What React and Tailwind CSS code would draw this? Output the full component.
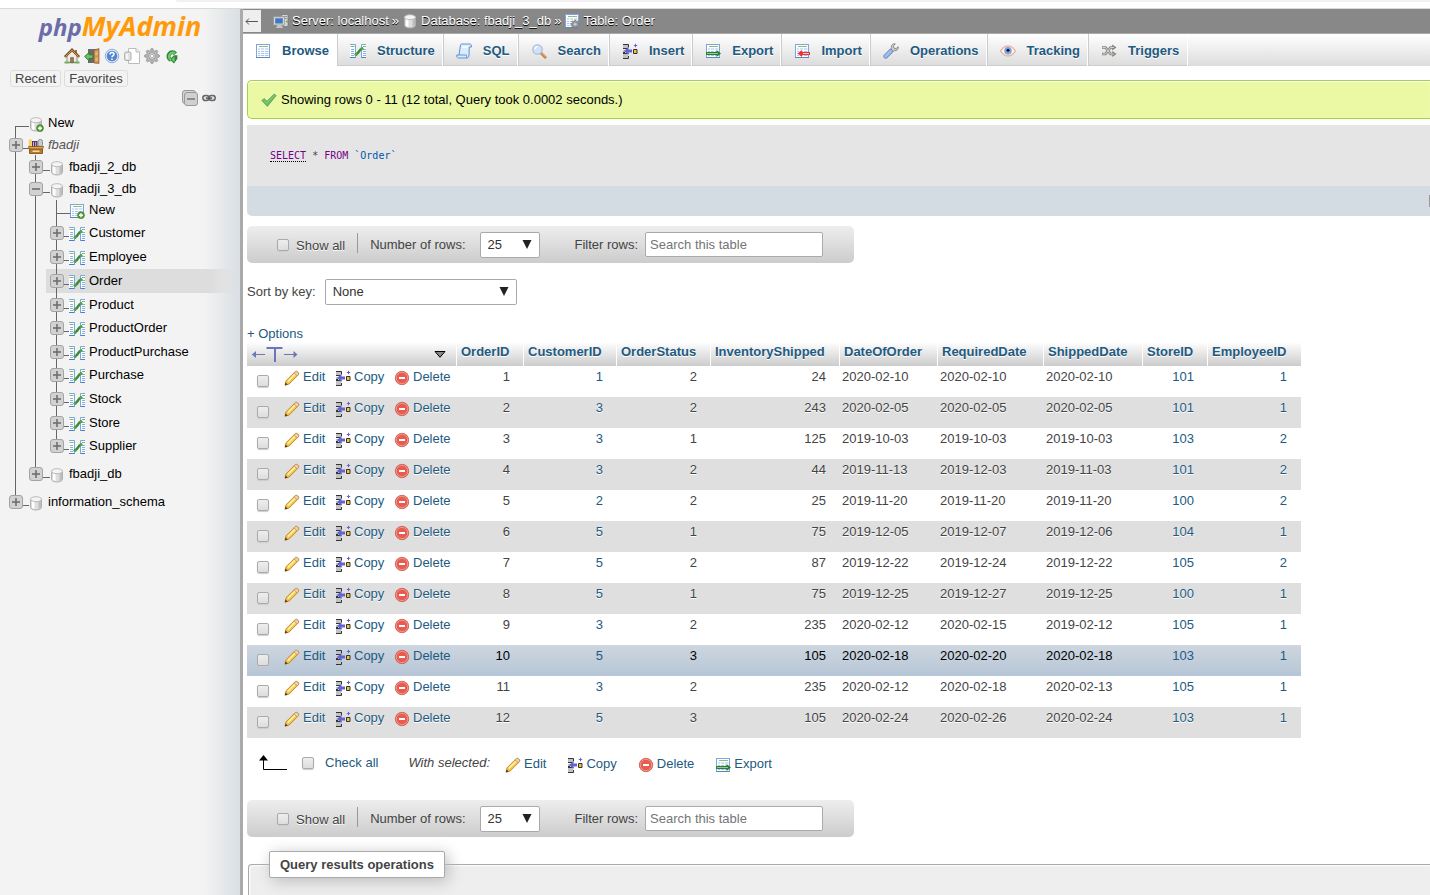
import React from "react";

/* ---------- icons ---------- */

function Icon({ children, className = "" }) {
  return (
    <svg viewBox="0 0 16 16" className={"h-4 w-4 shrink-0 " + className} aria-hidden="true">
      {children}
    </svg>
  );
}

const HomeIcon = () => (
  <Icon>
    <path d="M3 8v6.500h10V8L8 3z" fill="#f3eddf" stroke="#8c8c84" />
    <path d="M11 2h2v3h-2z" fill="#b5763a" />
    <path d="M.8 9 8 1.800 15.200 9" fill="none" stroke="#7b5226" strokeWidth="2.400" />
    <path d="M1.400 8.700 8 2.100l6.600 6.600" fill="none" stroke="#d3a066" strokeWidth="1" />
    <path d="M6.500 9.500h3V15h-3z" fill="#8d7a66" stroke="#6b4a22" strokeWidth=".5" />
    <path d="M.5 13.500h5v2h-5zM10.500 13.500h5v2h-5z" fill="#6fae5c" />
  </Icon>
);
const ExitIcon = () => (
  <Icon>
    <path d="M4 1h11v14H4z" fill="#6b6b6b" />
    <path d="M10 2 15 .6v14.800L10 15z" fill="#cf9455" stroke="#8a5a26" strokeWidth=".7" />
    <path d="M11.300 4 13.800 3.500v3.800l-2.500.3zM11.300 9.500l2.500-.2v3.700l-2.500.3z" fill="#e6b47c" />
    <path d="M.6 8.500 5 4.500v2.300h4v3.600H5v2.400z" fill="#6cc067" stroke="#2a7a2e" strokeWidth=".9" />
  </Icon>
);
const HelpIcon = () => (
  <Icon>
    <circle cx="8" cy="8" r="6.800" fill="#dbe7f6" stroke="#7ba3d6" strokeWidth=".8" />
    <circle cx="8" cy="8" r="5.300" fill="#5586cd" />
    <path d="M6 6.400c0-2.700 4-2.500 4-.2C10 7.700 8 7.700 8 9.200M8 10.400V12" fill="none" stroke="#fff" strokeWidth="1.500" />
  </Icon>
);
const DocIcon = () => (
  <Icon>
    <path d="M4.500 .5h7.500l3.500 3.500v11.500h-11z" fill="#fff" stroke="#bcbcbc" />
    <path d="M12 .5V4h3.500" fill="#eee" stroke="#bcbcbc" />
    <rect x=".6" y="4" width="6.400" height="8.500" rx="1.500" fill="#e2e2e2" stroke="#a5a5a5" strokeWidth=".9" />
    <path d="M3 6v5" stroke="#fff" strokeWidth="1.300" />
  </Icon>
);
const Gear = ({ fill = "#b5b5b5", stroke = "#8a8a8a" }) => (
  <>
    <path
      d="M7 .7h2l.4 1.900 1.500.6 1.600-1.100 1.400 1.400-1.100 1.600.6 1.500 1.900.4v2l-1.900.4-.6 1.500 1.100 1.600-1.400 1.400-1.600-1.100-1.500.6-.4 1.900H7l-.4-1.900-1.500-.6-1.600 1.100-1.400-1.400 1.100-1.600L2.600 9.400.7 9V7l1.900-.4.6-1.500-1.100-1.600 1.400-1.400 1.600 1.100 1.500-.6z"
      fill={fill}
      stroke={stroke}
      strokeWidth=".7"
    />
    <circle cx="8" cy="8" r="3.400" fill="#dcdcdc" stroke={stroke} strokeWidth=".7" />
    <circle cx="8" cy="8" r="1.600" fill="#fff" stroke={stroke} strokeWidth=".6" />
  </>
);
const GearIcon = () => (
  <Icon>
    <Gear />
  </Icon>
);
const ReloadIcon = () => (
  <Icon>
    <path d="M11.500 5.800A4 4 0 1 0 6.800 12" fill="none" stroke="#2f8a38" strokeWidth="4" />
    <path d="M13.400 7.200v3.600L10 15.500 5.800 11.600 10 7.200z" fill="#2f8a38" />
    <path d="M11 5.200A3.900 3.900 0 1 0 6.900 12" fill="none" stroke="#79c47a" strokeWidth="2" />
    <path d="m7.500 11.600 3-3v5.600z" fill="#79c47a" />
  </Icon>
);
const CollapseIcon = () => (
  <Icon>
    <rect x=".5" y=".5" width="13" height="13" rx="2.500" fill="#d4d4d4" stroke="#999" />
    <rect x="2.500" y="2.500" width="13" height="13" rx="2.500" fill="#d0d0d0" stroke="#999" />
    <path d="M5 9h8" stroke="#777" strokeWidth="1.500" />
  </Icon>
);
const LinkIcon = () => (
  <Icon>
    <rect x="1.800" y="5.600" width="6.200" height="5" rx="2.500" fill="#ddd" stroke="#666" strokeWidth="1.500" />
    <rect x="8" y="5.600" width="6.200" height="5" rx="2.500" fill="#ddd" stroke="#666" strokeWidth="1.500" />
    <path d="M5 8.100h6" stroke="#555" strokeWidth="1.500" />
  </Icon>
);
const Cylinder = () => (
  <>
    <path d="M2.500 4.200v8.100c0 1.500 2.500 2.700 5.500 2.700s5.500-1.200 5.500-2.700V4.200z" fill="#dedede" stroke="#aaa" strokeWidth=".9" />
    <path d="M4 5.500v7.600c.8.500 1.500.7 2.500.9V6z" fill="#fff" />
    <path d="M10.500 6v8c1-.2 1.900-.6 2.500-1.200V5z" fill="#bdbdbd" />
    <ellipse cx="8" cy="4.200" rx="5.500" ry="2.500" fill="#f4f4f4" stroke="#b5b5b5" strokeWidth=".9" />
  </>
);
const Plus = () => (
  <>
    <circle cx="12" cy="12.200" r="3.400" fill="#56a136" stroke="#397f22" strokeWidth=".7" />
    <path d="M12 10.200v4M10 12.200h4" stroke="#fff" strokeWidth="1.400" />
  </>
);
const DbIcon = () => (
  <Icon>
    <Cylinder />
  </Icon>
);
const DbNewIcon = () => (
  <Icon>
    <Cylinder />
    <Plus />
  </Icon>
);
const Grid = () => (
  <>
    <rect x="1.500" y="1.500" width="13" height="13" fill="#fff" stroke="#7ea6dc" />
    <path d="M4 3.500h9" stroke="#8cc07c" />
    <path d="M3 6h10.500M3 8.500h10.500M3 10.500h10.500M3 12.500h10.500" stroke="#a9c4ea" />
    <path d="M5.500 5v8.500M9.500 5v8.500" stroke="#fff" strokeWidth=".8" />
    <path d="M1 14.500h14" stroke="#5787c8" />
  </>
);
const TableIcon = () => (
  <Icon>
    <Grid />
  </Icon>
);
const TableNewIcon = () => (
  <Icon>
    <Grid />
    <Plus />
  </Icon>
);
const TableGearIcon = () => (
  <Icon>
    <Grid />
    <g transform="translate(6.500 6.500) scale(.58)">
      <Gear fill="#999" stroke="#666" />
    </g>
  </Icon>
);
const StructureIcon = () => (
  <Icon>
    <path d="M0 1.500h5v13H0z" fill="#fff" />
    <path d="M0 1.500h5.500v13H0" fill="none" stroke="#7aa7df" />
    <path d="M16 1.500h-4.500v13H16" fill="#fff" stroke="#7aa7df" />
    <path d="M.5 3.500h4M13 3.500h3" stroke="#7fb86b" />
    <path d="M1 6.500h3M1 8.500h3M1 10.500h3M1 12.500h3M13 6.500h3M13 8.500h3M13 10.500h3M13 12.500h3" stroke="#86aee3" />
    <path d="M0 14.500h5.500M11.500 14.500H16" stroke="#4a7fc4" />
    <path d="M6 11.200 7.800 10l2.700-3.500 1.500-.8" fill="none" stroke="#3c8a35" strokeWidth="2.400" strokeLinecap="round" />
    <circle cx="6" cy="11.500" r="1.600" fill="#4fa745" />
    <circle cx="12" cy="5.500" r="1.600" fill="#4fa745" />
  </Icon>
);
const FolderIcon = () => (
  <Icon>
    <path d="M.8 1.500h3v7h-3z" fill="#f2d35e" />
    <path d="M4 3h5.500v6H4z" fill="#4d3a5b" />
    <path d="M5.500 4v4M7.700 4v4" stroke="#d9a9e0" />
    <rect x="10" y="1.500" width="4.500" height="7" rx="2" fill="#ccc" stroke="#777" strokeWidth=".8" />
    <path d="M.5 8.500h15l-1 3h-13z" fill="#dba55a" stroke="#8a5716" strokeWidth=".8" />
    <path d="M1.500 11h13v4.500h-13z" fill="#b97a2c" stroke="#7a4a10" strokeWidth=".8" />
    <path d="M4.500 12.500h7v1.500h-7z" fill="#f3d9a5" />
  </Icon>
);
const ServerIcon = () => (
  <Icon>
    <path d="M8.500 1.500h6.500v12H10z" fill="#d7d7d7" stroke="#777" strokeWidth=".8" />
    <path d="M10 3.500h4M10 5.500h4" stroke="#888" strokeWidth=".8" />
    <path d="M13 8.500h1.500" stroke="#4fae3f" strokeWidth="1.400" />
    <rect x=".6" y="3.800" width="10.800" height="8.200" fill="#d5d5d5" stroke="#9a9a9a" strokeWidth=".8" />
    <rect x="2.200" y="5.300" width="7.600" height="5.200" fill="#3f78c9" />
    <path d="M3 15h7l-1.500-3h-4z" fill="#c4c4c4" />
  </Icon>
);
const SqlIcon = () => (
  <Icon>
    <path d="M4.500 2 3 12H.8c-.3 1.500.4 3 1.700 3h8.500c1.500 0 1.800-1.500 2-3L13.300 4h2.200c.3-1.500-.4-3-1.700-3H6C5 1 4.700 1.300 4.500 2z" fill="#dcecfb" stroke="#5c93d6" />
    <path d="M3 12h7.500c-.2 1.300.1 2.500.9 3" fill="none" stroke="#5c93d6" />
    <path d="M6 4h6" stroke="#fff" strokeWidth="1.500" />
  </Icon>
);
const SearchIcon = () => (
  <Icon>
    <path d="m10 10 4.200 4.200" stroke="#c38443" strokeWidth="2.800" strokeLinecap="round" />
    <path d="m10.300 9.600 4 4" stroke="#eabf83" strokeWidth=".9" />
    <circle cx="6.500" cy="6.500" r="4.700" fill="#cfe2f9" stroke="#a9bfdb" strokeWidth="1.300" />
    <path d="M4 6.200a2.700 2.700 0 0 1 2.700-2.500" fill="none" stroke="#fff" strokeWidth="1.300" />
  </Icon>
);
const InsertIcon = () => (
  <Icon>
    <path d="M1 2h5v3H1zM1 11h5v4H1zM1 7h2v2H1z" fill="#c2c2c2" />
    <path d="M1 1.500h5.500v3M1 5.500h5M1 10.500h5.500M6.500 13v2.500H1M1 9.500h2" fill="none" stroke="#333" />
    <path d="M2 8 6.500 4v2.500H10v3H6.500V12z" fill="#6563cf" />
    <path d="M15 6.500h-3.500v4H15z" fill="#f8c22c" stroke="#333" />
    <path d="M13.500 .8v3.400M11.800 2.500h3.400" stroke="#6563cf" />
  </Icon>
);
const ExportIcon = () => (
  <Icon>
    <Grid />
    <path d="M1 9h10.500V7l4.500 3.500-4.500 3.500v-2H1z" fill="#2f7d2f" />
    <path d="M2 10.500h11" stroke="#8fd08a" />
  </Icon>
);
const ImportIcon = () => (
  <Icon>
    <Grid />
    <path d="M16 9H8V7l-4.500 3.500L8 14v-2h8z" fill="#f0322c" />
    <path d="M9 10.500h6" stroke="#ffc9c6" />
  </Icon>
);
const WrenchIcon = () => (
  <Icon>
    <path d="M12.300.8c-2.600-.4-4.600 1.700-3.800 4.100L7.300 6.300l2.500 2.500 1.400-1.200c2.400.7 4.500-1.300 4-3.900l-2.200 2-2-.6-.6-2z" fill="#cfcfcf" stroke="#777" strokeWidth=".8" />
    <path d="m2.700 13.300 5-5" stroke="#6386c6" strokeWidth="4.600" strokeLinecap="round" />
    <path d="m2.700 13.300 5-5" stroke="#a3bdf0" strokeWidth="3" strokeLinecap="round" />
  </Icon>
);
const EyeIcon = () => (
  <Icon>
    <path d="M.5 8C3.500 1.200 12.500 1.200 15.500 8 12.500 14.800 3.500 14.800.5 8z" fill="#f3dccb" stroke="#dca27c" strokeWidth=".9" />
    <path d="M2 8c2.500-4.600 9.500-4.600 12 0-2.500 4.600-9.500 4.600-12 0z" fill="#fff" />
    <circle cx="8" cy="7.800" r="3.800" fill="#7fa3e6" />
    <circle cx="8" cy="7.200" r="1.500" fill="#111" />
  </Icon>
);
const TriggersIcon = () => (
  <Icon>
    <path d="M1 4.500h3.500l5 6.500H12M1 11h3.500l5-6.500H12" fill="none" stroke="#7f827c" strokeWidth="2.600" />
    <path d="M11.200 1.500 15.500 4.600l-4.300 3zM11.200 8l4.300 3-4.300 3z" fill="#7f827c" />
    <path d="M1.500 4.500h3l5 6.500H13M1.500 11h3l5-6.500H13" fill="none" stroke="#e3e3e0" strokeWidth=".9" />
  </Icon>
);
const CheckIcon = () => (
  <Icon>
    <path d="M.8 8.600 3 6.400l3 2.800L13.200 2l2 1.600L6.400 14.400z" fill="#6bb85f" stroke="#4a9443" strokeWidth=".6" />
    <path d="M2.500 8.300 6 11.300l7.500-8" fill="none" stroke="#93d387" strokeWidth=".9" />
  </Icon>
);
const PencilIcon = () => (
  <Icon>
    <path d="M1 15.300 2 10.800 11.300 1.600c1.200-1.100 4.400 1.400 3.100 3.100L5.200 14z" fill="#f5c744" stroke="#b07a28" strokeWidth=".8" />
    <path d="m3.800 11.500 8-8" stroke="#fff2ae" strokeWidth="1.700" />
    <path d="M11.300 1.600c1.200-1.100 4.400 1.400 3.100 3.100l-1.200 1.200-3.100-3.100z" fill="#f0d2ac" stroke="#b5804a" strokeWidth=".7" />
    <path d="M1 15.300 1.600 12.500 3.700 14.600z" fill="#4a3413" />
  </Icon>
);
const DeleteIcon = () => (
  <Icon>
    <circle cx="8" cy="8" r="6.700" fill="#e85c50" stroke="#c9635b" strokeWidth=".9" />
    <circle cx="8" cy="8" r="5.700" fill="none" stroke="#f3a49c" strokeWidth=".8" />
    <path d="M5 8h6" stroke="#fff" strokeWidth="2" />
  </Icon>
);
const FullTextIcon = () => (
  <svg viewBox="0 0 48 16" className="h-4 w-12" aria-hidden="true">
    <path d="M1 8.500h13M33 8.500h13" stroke="#6b77b8" />
    <path d="M1 8.500 5 5v7zM46.500 8.500l-4-3.500v7z" fill="#6b77b8" />
    <path d="M15.500 2h16" stroke="#6b77b8" strokeWidth="2" />
    <path d="M24 2v14" stroke="#6b77b8" strokeWidth="2" />
  </svg>
);

/* ---------- sidebar ---------- */

function Guide({ wide }) {
  return (
    <span className={(wide ? "w-[21px]" : "w-5") + " flex shrink-0 self-stretch pl-[10px]"}>
      <span className="w-px bg-[#666]" />
    </span>
  );
}

/* line: which part of the vertical guide this node draws */
function NodeCell({ box, line, wide }) {
  const vertical = { full: "top-0 bottom-0", down: "top-[15px] bottom-0", up: "top-0 bottom-1/2" }[line];
  return (
    <span className={(wide ? "w-[21px]" : "w-5") + " relative flex shrink-0 items-center self-stretch pl-1"}>
      <span className={"absolute left-[10px] w-px bg-[#666] " + vertical} />
      <span className="absolute left-[10px] -right-1 top-1/2 mt-[3px] h-px bg-[#666]" />
      {box && (
        <button type="button" aria-label={box === "+" ? "Expand" : "Collapse"} className="relative h-[14px] w-[14px]">
          <svg viewBox="0 0 14 14" className="h-[14px] w-[14px]" aria-hidden="true">
            <rect x=".5" y=".5" width="13" height="13" rx="2.500" fill="#d2d2d2" stroke="#a3a3a3" />
            <path d="M3 7h8" stroke="#6f6f6f" strokeWidth="1.600" />
            {box === "+" && <path d="M7 3v8" stroke="#6f6f6f" strokeWidth="1.600" />}
          </svg>
        </button>
      )}
    </span>
  );
}

const tree = [
  { level: 0, name: "New", icon: DbNewIcon, line: "down", h: "h-[23px]" },
  { level: 0, name: "fbadji", icon: FolderIcon, box: "+", line: "full", h: "h-[21px]", italic: true },
  { level: 1, name: "fbadji_2_db", icon: DbIcon, box: "+", line: "full", h: "h-[23px]" },
  { level: 1, name: "fbadji_3_db", icon: DbIcon, box: "-", line: "full", h: "h-[22px]" },
  { level: 2, name: "New", icon: TableNewIcon, line: "full", h: "h-5" },
  { level: 2, name: "Customer", icon: StructureIcon, box: "+", line: "full", h: "h-[25px]" },
  { level: 2, name: "Employee", icon: StructureIcon, box: "+", line: "full", h: "h-6" },
  { level: 2, name: "Order", icon: StructureIcon, box: "+", line: "full", h: "h-6", active: true },
  { level: 2, name: "Product", icon: StructureIcon, box: "+", line: "full", h: "h-[23px]" },
  { level: 2, name: "ProductOrder", icon: StructureIcon, box: "+", line: "full", h: "h-6" },
  { level: 2, name: "ProductPurchase", icon: StructureIcon, box: "+", line: "full", h: "h-[23px]" },
  { level: 2, name: "Purchase", icon: StructureIcon, box: "+", line: "full", h: "h-6" },
  { level: 2, name: "Stock", icon: StructureIcon, box: "+", line: "full", h: "h-6" },
  { level: 2, name: "Store", icon: StructureIcon, box: "+", line: "full", h: "h-[23px]" },
  { level: 2, name: "Supplier", icon: StructureIcon, box: "+", line: "up", h: "h-6" },
  { level: 1, name: "fbadji_db", icon: DbIcon, box: "+", line: "up", h: "h-8" },
  { level: 0, name: "information_schema", icon: DbIcon, box: "+", line: "up", h: "h-[23px]" },
];

function Sidebar() {
  const tools = [
    ["Home", HomeIcon],
    ["Log out", ExitIcon],
    ["Documentation", HelpIcon],
    ["SQL documentation", DocIcon],
    ["Settings", GearIcon],
    ["Reload", ReloadIcon],
  ];
  return (
    <aside className="w-[243px] shrink-0 border-r-[3px] border-[#aaa] bg-[linear-gradient(to_right,#f3f3f3_85%,#dadfe3)]">
      <a href="#home" className="flex h-[37px] items-baseline justify-center font-['Open_Sans',sans-serif] font-bold italic leading-[34px]">
        <span className="text-[24px] text-[#6c6ca8]">php</span>
        <span className="text-[27px] text-[#ff9a08]">MyAdmin</span>
      </a>
      <div className="mt-[2px] flex gap-1 pl-16">
        {tools.map(([label, I]) => (
          <a key={label} href="#tool" aria-label={label}>
            <I />
          </a>
        ))}
      </div>
      <div className="mt-[6px] flex gap-[3px] pl-[10px] leading-[15px] text-[#444]">
        <button type="button" className="rounded-[3px] border border-[#ddd] px-1">Recent</button>
        <button type="button" className="rounded-[3px] border border-[#ddd] px-1">Favorites</button>
      </div>
      <div className="mt-[3px] flex gap-[3px] pl-[182px]">
        <button type="button" aria-label="Collapse all"><CollapseIcon /></button>
        <button type="button" aria-label="Unlink from main panel"><LinkIcon /></button>
      </div>
      <ul className="mt-[5px] leading-4">
        {tree.map((n, i) => {
          const I = n.icon;
          return (
            <li key={i} className={"flex pl-[5px] " + n.h}>
              {n.level > 0 && <Guide />}
              {n.level > 1 && <Guide wide />}
              <div
                className={
                  "flex min-w-0 flex-1 items-center " +
                  (n.active ? "bg-[linear-gradient(to_right,#ddd_85%,transparent)]" : "")
                }
              >
                <NodeCell box={n.box} line={n.line} wide={n.level === 1} />
                <span className="relative ml-[3px] mt-[2px]">
                  <I />
                </span>
                <a href="#node" className={"ml-1 " + (n.italic ? "italic text-[#555]" : "text-black")}>
                  {n.name}
                </a>
              </div>
            </li>
          );
        })}
      </ul>
    </aside>
  );
}

/* ---------- main panel ---------- */

const tabs = [
  ["Browse", TableIcon],
  ["Structure", StructureIcon],
  ["SQL", SqlIcon],
  ["Search", SearchIcon],
  ["Insert", InsertIcon],
  ["Export", ExportIcon],
  ["Import", ImportIcon],
  ["Operations", WrenchIcon],
  ["Tracking", EyeIcon],
  ["Triggers", TriggersIcon],
];

function Checkbox(props) {
  return (
    <input
      type="checkbox"
      {...props}
      className="block h-3 w-3 shrink-0 appearance-none rounded-[2px] border border-[#aaa] bg-linear-to-b from-[#eee] to-[#ddd] shadow-[0_1px_1px_#ccc]"
    />
  );
}

function Select({ id, value, className }) {
  return (
    <span className="relative flex">
      <select
        id={id}
        defaultValue={value}
        className={"h-[26px] appearance-none rounded-[2px] border border-[#aaa] bg-white pl-[7px] text-[#333] " + className}
      >
        <option>{value}</option>
      </select>
      <svg viewBox="0 0 10 9" className="pointer-events-none absolute right-2 top-2 h-[9px] w-[10px]" aria-hidden="true">
        <path d="M.5 0h9L5 9z" fill="#222" />
      </svg>
    </span>
  );
}

function Navigation({ id }) {
  return (
    <div className="flex h-[37px] w-[607px] items-center rounded-[5px] bg-linear-to-b from-[#eee] to-[#ccc] pl-[30px]">
      <Checkbox id={id + "-all"} />
      <label htmlFor={id + "-all"} className="ml-[7px] mt-[2px] [text-shadow:0_1px_0_#fff]">Show all</label>
      <span className="ml-3 mt-[7px] h-5 w-px self-start bg-[#999]" />
      <label htmlFor={id + "-rows"} className="ml-3 mr-[14px]">Number of rows:</label>
      <Select id={id + "-rows"} value="25" className="w-[60px]" />
      <label htmlFor={id + "-filter"} className="ml-[35px] mr-[7px]">Filter rows:</label>
      <input
        id={id + "-filter"}
        type="text"
        placeholder="Search this table"
        className="h-[25px] w-[178px] rounded-[2px] border border-[#aaa] bg-white px-1 placeholder:text-[#757575]"
      />
    </div>
  );
}

function Action({ icon: I, label }) {
  return (
    <a href="#action" className="flex items-center gap-[3px] text-[#235a81]">
      <span className="mt-[2px]">
        <I />
      </span>
      {label}
    </a>
  );
}

const columns = [
  ["OrderID", "num"],
  ["CustomerID", "link"],
  ["OrderStatus", "num"],
  ["InventoryShipped", "num"],
  ["DateOfOrder", "date"],
  ["RequiredDate", "date"],
  ["ShippedDate", "date"],
  ["StoreID", "link"],
  ["EmployeeID", "link"],
];
const colWidths = [
  "w-[35px]", "w-[51px]", "w-[60px]", "w-16", "w-[67px]", "w-[93px]", "w-[94px]",
  "w-[129px]", "w-[98px]", "w-[106px]", "w-[99px]", "w-[65px]", "w-[93px]",
];
const rows = [
  [1, 1, 2, 24, "2020-02-10", "2020-02-10", "2020-02-10", 101, 1],
  [2, 3, 2, 243, "2020-02-05", "2020-02-05", "2020-02-05", 101, 1],
  [3, 3, 1, 125, "2019-10-03", "2019-10-03", "2019-10-03", 103, 2],
  [4, 3, 2, 44, "2019-11-13", "2019-12-03", "2019-11-03", 101, 2],
  [5, 2, 2, 25, "2019-11-20", "2019-11-20", "2019-11-20", 100, 2],
  [6, 5, 1, 75, "2019-12-05", "2019-12-07", "2019-12-06", 104, 1],
  [7, 5, 2, 87, "2019-12-22", "2019-12-24", "2019-12-22", 105, 2],
  [8, 5, 1, 75, "2019-12-25", "2019-12-27", "2019-12-25", 100, 1],
  [9, 3, 2, 235, "2020-02-12", "2020-02-15", "2019-02-12", 105, 1],
  [10, 5, 3, 105, "2020-02-18", "2020-02-20", "2020-02-18", 103, 1],
  [11, 3, 2, 235, "2020-02-12", "2020-02-18", "2020-02-13", 105, 1],
  [12, 5, 3, 105, "2020-02-24", "2020-02-26", "2020-02-24", 103, 1],
];
const headCell = "h-6 border-r border-white bg-linear-to-b from-white to-[#ccc] p-0 text-left align-middle";

function Results() {
  return (
    <table className="w-[1054px] table-fixed border-separate border-spacing-0">
      <colgroup>
        {colWidths.map((w, i) => (
          <col key={i} className={w} />
        ))}
      </colgroup>
      <thead>
        <tr>
          <th colSpan={4} className={headCell}>
            <div className="flex items-center justify-between pl-1 pr-[10px]">
              <FullTextIcon />
              <svg viewBox="0 0 12 7" className="h-[7px] w-3" aria-hidden="true">
                <path d="M1 .5h10L6 6.300z" fill="#888" stroke="#000" />
              </svg>
            </div>
          </th>
          {columns.map(([name], i) => (
            <th key={name} scope="col" className={headCell + (i === columns.length - 1 ? " border-r-0" : "")}>
              <a href="#sort" className="block pb-1 pl-1 font-bold text-[#235a81] [text-shadow:0_1px_0_#fff]">{name}</a>
            </th>
          ))}
        </tr>
      </thead>
      <tbody>
        {rows.map((r, i) => {
          const marked = r[0] === 10;
          const tone = marked
            ? "bg-linear-to-b from-[#ced6df] to-[#b6c6d7] text-black"
            : i % 2
              ? "bg-[#dfdfdf] [text-shadow:0_1px_0_#fff]"
              : "bg-white";
          return (
            <tr key={r[0]} className={"h-[31px] align-top " + tone}>
              <td className="p-0 pl-[10px] pt-[9px]">
                <Checkbox aria-label={"Select row " + r[0]} />
              </td>
              <td className="p-0 pl-[2px] pt-[2px]"><Action icon={PencilIcon} label="Edit" /></td>
              <td className="p-0 pl-[2px] pt-[2px]"><Action icon={InsertIcon} label="Copy" /></td>
              <td className="p-0 pl-[1px] pt-[2px]"><Action icon={DeleteIcon} label="Delete" /></td>
              {r.map((v, c) => {
                const kind = columns[c][1];
                return (
                  <td key={c} className={kind === "date" ? "p-0 pl-[2px] pt-[3px]" : "p-0 pr-[14px] pt-[3px] text-right"}>
                    {kind === "link" ? <a href="#row" className="text-[#235a81]">{v}</a> : v}
                  </td>
                );
              })}
            </tr>
          );
        })}
      </tbody>
    </table>
  );
}

function Main() {
  return (
    <main className="flex min-w-0 flex-1 flex-col bg-white text-[#444]">
      <header className="flex h-[25px] items-center border-b border-[#aaa] bg-[#888] text-white [text-shadow:0_1px_0_#000]">
        <button type="button" aria-label="Hide panel" className="flex h-[22px] w-[18px] items-center justify-center bg-[#eee]">
          <svg viewBox="0 0 14 8" className="h-2 w-[14px]" aria-hidden="true">
            <path d="M1 4.500h12M4 1.500l-3 3 3 3" fill="none" stroke="#555" />
          </svg>
        </button>
        <nav className="ml-3 flex items-center gap-[3px]">
          <ServerIcon />
          <a href="#server">Server: localhost</a>
          <span>»</span>
          <DbIcon />
          <a href="#database">Database: fbadji_3_db</a>
          <span>»</span>
          <TableGearIcon />
          <a href="#table">Table: Order</a>
        </nav>
      </header>

      <nav className="flex h-8 bg-linear-to-b from-white to-[#dcdcdc]">
        {tabs.map(([name, I], i) => (
          <a
            key={name}
            href="#tab"
            className={
              "flex items-center gap-[11px] border-r pl-3 pr-2 pt-px font-bold text-[#235a81] [text-shadow:0_1px_0_#fff] " +
              (i === 0
                ? "border-[#ccc] bg-white"
                : i === tabs.length - 1
                  ? "border-white shadow-[inset_0_-1px_0_#ccc]"
                  : "border-[#ccc] shadow-[inset_-1px_0_0_#fff,inset_0_-1px_0_#ccc]")
            }
          >
            <I />
            {name}
          </a>
        ))}
      </nav>

      <div className="flex flex-1 flex-col pl-1">
        <div className="mt-[14px] flex h-[39px] items-center rounded-l-[5px] border border-r-0 border-[#a2d246] bg-[#ebf8a4] pl-[13px] text-black shadow-[inset_0_1px_1px_#fff]">
          <CheckIcon />
          <span className="ml-1">Showing rows 0 - 11 (12 total, Query took 0.0002 seconds.)</span>
        </div>

        <div className="mt-[6px] h-[61px] bg-[#e5e5e5] pl-[23px] pt-[25px] font-['DejaVu_Sans_Mono',monospace] text-[10px] leading-3">
          <code className="font-[inherit]">
            <span className="border-b border-dotted border-black text-[#708]">SELECT</span>
            <span className="text-[#444]"> * </span>
            <span className="text-[#708]">FROM</span>
            <span className="text-[#05a]"> `Order`</span>
          </code>
        </div>
        <div className="flex h-[30px] items-center justify-end rounded-bl-[5px] bg-[#d3dce3]">
          <span className="h-3 w-px bg-[#999]" />
        </div>

        <div className="mt-[10px]">
          <Navigation id="top" />
        </div>

        <div className="mt-4 flex items-center">
          <label htmlFor="sort-key" className="mr-[9px]">Sort by key:</label>
          <Select id="sort-key" value="None" className="w-48" />
        </div>

        <a href="#options" className="mt-[21px] self-start text-[#235a81]">+ Options</a>
        <Results />

        <div className="flex h-[62px] items-center pb-3 pl-3 text-[#235a81]">
          <svg viewBox="0 0 28 16" className="h-4 w-7" aria-hidden="true">
            <path d="M4.500 4v10.500H28" fill="none" stroke="#000" />
            <path d="M0 5.500 4.500 0 9 5.500z" fill="#000" />
          </svg>
          <div className="ml-[15px] flex items-center gap-[11px]">
            <Checkbox id="check-all" />
            <label htmlFor="check-all">Check all</label>
          </div>
          <i className="ml-[30px] mr-[15px] text-[#444]">With selected:</i>
          <div className="flex gap-[21px] pt-[2px]">
            <Action icon={PencilIcon} label="Edit" />
            <Action icon={InsertIcon} label="Copy" />
            <Action icon={DeleteIcon} label="Delete" />
            <Action icon={ExportIcon} label="Export" />
          </div>
        </div>

        <Navigation id="bottom" />

        <fieldset className="ml-px mt-[14px] flex-1 rounded-tl-[4px] border border-b-0 border-r-0 border-[#aaa] bg-[#eee] pb-4 pl-5 shadow-[inset_1px_1px_2px_#fff]">
          <legend className="h-[27px] rounded-[2px] border border-[#aaa] bg-white px-[10px] font-bold leading-[25px] shadow-[3px_3px_15px_#bbb]">
            Query results operations
          </legend>
        </fieldset>
      </div>
    </main>
  );
}

export default function App() {
  return (
    <div className="flex min-h-screen flex-col bg-white font-['Liberation_Sans',Arial,sans-serif] text-[13px] leading-4">
      <div className="h-[9px] border-b border-[#d9d9d9] pl-44">
        <div className="h-[2px] rounded-bl-[4px] bg-[#f1f1f1]" />
      </div>
      <div className="flex flex-1">
        <Sidebar />
        <Main />
      </div>
    </div>
  );
}
